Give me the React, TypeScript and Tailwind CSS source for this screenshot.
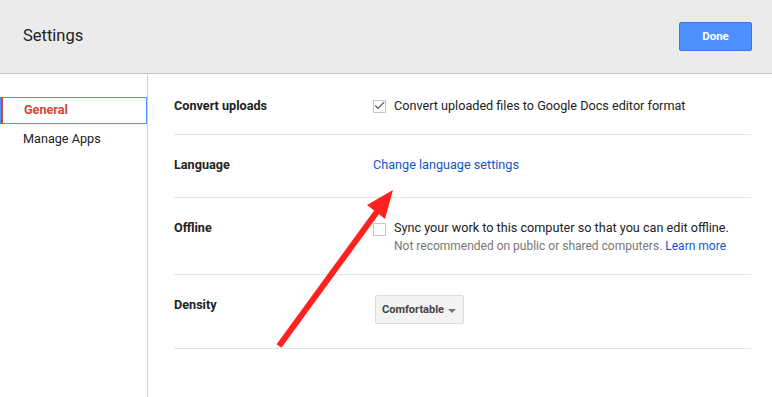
export default function App() {
  const font = { fontFamily: 'Roboto, "Liberation Sans", Arial, sans-serif' };
  return (
    <div className="relative h-[397px] w-[772px] overflow-hidden bg-white text-[12.65px] text-[#222]" style={font}>
      {/* Header */}
      <div className="flex h-[74px] items-center justify-between border-b border-[#c6c6c6] bg-[#ebebeb] pl-[23px] pr-[20px]">
        <h1 className="text-[16.5px] text-[#222]">Settings</h1>
        <button className="h-[29px] w-[73px] rounded-[2px] border border-[#3079ed] bg-[#4d90fe] text-[11.5px] font-bold text-white">
          Done
        </button>
      </div>

      <div className="flex h-[323px]">
        {/* Sidebar */}
        <div className="w-[148px] shrink-0 border-r border-[#d0d0d0] pt-[23px]">
          <div className="relative flex h-[27px] items-center border border-[#4d90fe] pl-[23px] font-bold text-[#d14836]">
            <span className="absolute left-0 top-[-1px] h-[27px] w-[2px] bg-[#d14836]" />
            General
          </div>
          <div className="flex h-[30px] items-center pl-[23px]">Manage Apps</div>
        </div>

        {/* Content */}
        <div className="flex-1 pl-[26px] pr-[21px]">
          <div className="flex border-b border-[#e5e5e5] pb-[19px] pt-[23px]">
            <div className="w-[199px] font-bold leading-[18px]">Convert uploads</div>
            <label className="flex items-center gap-[8px] leading-[18px]">
              <span className="flex h-[13px] w-[13px] items-center justify-center border border-[#c6c6c6] bg-white">
                <svg width="13" height="11" viewBox="0 0 13 11" className="-mt-[1px]">
                  <path d="M1.5 5.5 L4.8 9 L12 1.5" fill="none" stroke="#555" strokeWidth="1.4" />
                </svg>
              </span>
              Convert uploaded files to Google Docs editor format
            </label>
          </div>

          <div className="flex border-b border-[#e5e5e5] pb-[23px] pt-[21px]">
            <div className="w-[199px] font-bold leading-[18px]">Language</div>
            <a className="leading-[18px] text-[#1155cc]">Change language settings</a>
          </div>

          <div className="flex border-b border-[#e5e5e5] pb-[19px] pt-[21px]">
            <div className="w-[199px] font-bold leading-[18px]">Offline</div>
            <div className="flex gap-[8px]">
              <span className="mt-[4px] h-[13px] w-[13px] border border-[#c6c6c6] bg-white" />
              <div className="leading-[18px]">
                <div>Sync your work to this computer so that you can edit offline.</div>
                <div className="text-[12px] text-[#777]">
                  Not recommended on public or shared computers.{' '}
                  <a className="text-[#1155cc]">Learn more</a>
                </div>
              </div>
            </div>
          </div>

          <div className="flex items-start border-b border-[#e5e5e5] pb-[24px] pt-[20px]">
            <div className="w-[201px] pt-[1px] font-bold leading-[18px]">Density</div>
            <button className="flex h-[29px] w-[89px] items-center justify-between rounded-[2px] border border-[#dcdcdc] bg-[#f3f3f3] pl-[6px] pr-[7px] pt-[2px] text-[11px] font-bold text-[#444]">
              Comfortable
              <svg width="8" height="4" viewBox="0 0 8 4">
                <path d="M0 0 L8 0 L4 4 Z" fill="#777" />
              </svg>
            </button>
          </div>
        </div>
      </div>

      {/* Annotation arrow */}
      <svg className="pointer-events-none absolute left-0 top-0" width="772" height="397" viewBox="0 0 772 397">
        <line x1="279" y1="346" x2="379" y2="209" stroke="#ff2020" strokeWidth="6" strokeLinecap="butt" />
        <polygon points="393,190 367,205 385,219" fill="#ff2020" />
      </svg>
    </div>
  );
}
